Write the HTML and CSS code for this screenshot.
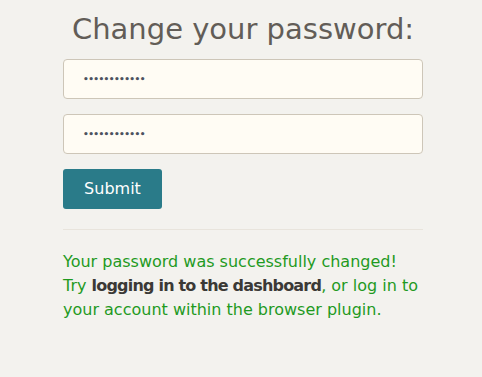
FILE: index.html
```html
<!DOCTYPE html>
<html>
<head>
<meta charset="utf-8">
<link rel="stylesheet" href="styles.css">
</head>
<body>
<main class="wrap">
  <h1 class="title">Change your password:</h1>
  <form class="form">
    <input class="field" type="password" value="abcdefghijkl">
    <input class="field" type="password" value="abcdefghijkl">
    <button class="submit" type="button">Submit</button>
  </form>
  <hr class="rule">
  <p class="msg">Your password was successfully changed! Try <a class="link" href="#">logging in to the dashboard</a>, or log in to your account within the browser plugin.</p>
</main>
</body>
</html>
```
FILE: styles.css
```css
html, body {
  margin: 0;
  padding: 0;
  background: #f3f2ee;
}
body {
  font-family: "DejaVu Sans", sans-serif;
}
.wrap {
  width: 360px;
  margin-left: 63px;
}
.title {
  margin: 0;
  padding-top: 10px;
  font-size: 29px;
  font-weight: 400;
  line-height: 38px;
  color: #625d57;
  text-align: center;
}
.form {
  margin-top: 11px;
  display: flex;
  flex-direction: column;
  align-items: flex-start;
}
.field {
  box-sizing: border-box;
  width: 360px;
  height: 40px;
  margin: 0 0 15px 0;
  padding: 0 19px;
  border: 1px solid #cdc6b8;
  border-radius: 4px;
  background: #fffcf4;
  font-family: "DejaVu Sans", sans-serif;
  font-size: 9px;
  font-weight: 700;
  letter-spacing: -0.6px;
  color: #4d5260;
}
.submit {
  box-sizing: border-box;
  width: 99px;
  height: 40px;
  border: none;
  border-radius: 3px;
  background: #2a7b89;
  color: #fff;
  font-family: "DejaVu Sans", sans-serif;
  font-size: 16px;
  font-weight: 500;
  padding: 0 0 1px 0;
}
.rule {
  margin: 20px 0 0 0;
  border: none;
  border-top: 1px solid #e8e4dc;
  height: 0;
}
.msg {
  margin: 20px 0 0 0;
  font-size: 16px;
  line-height: 24px;
  color: #1f9a1f;
}
.link {
  color: #3b3936;
  font-weight: 600;
  letter-spacing: -0.8px;
  text-decoration: none;
}
```
